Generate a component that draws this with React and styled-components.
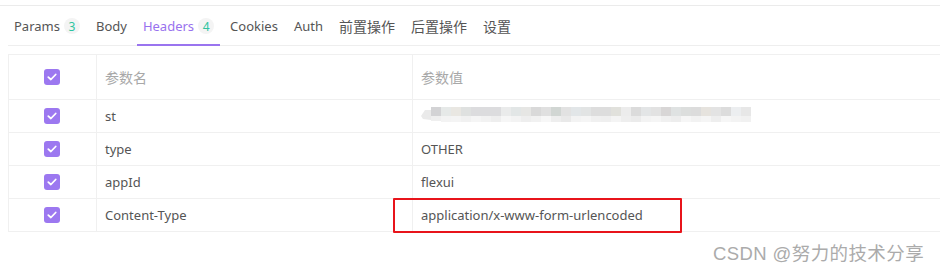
import React from "react";
import styled, { createGlobalStyle } from "styled-components";

const Global = createGlobalStyle`
  html, body { margin: 0; padding: 0; background: #fff; }
  body { font-family: "Noto Sans", "Open Sans", "Noto Sans CJK SC", sans-serif; overflow: hidden; }
`;

const Page = styled.div`
  position: relative;
  width: 940px;
  height: 270px;
  overflow: hidden;
  padding-top: 5px;
  box-sizing: border-box;
`;

const TopRule = styled.div`
  border-top: 1px solid #ebebeb;
`;

const TabBar = styled.div`
  display: flex;
  align-items: stretch;
  gap: 4px;
  margin-left: 8px;
  height: 39px;
  border-bottom: 1px solid #eeeeee;
`;

const Tab = styled.div`
  display: flex;
  align-items: center;
  gap: 4px;
  padding: 0 6px;
  font-size: ${(p) => (p.$cjk ? "14px" : "13px")};
  color: ${(p) => (p.$active ? "#9872ee" : "#555")};
  border-bottom: 2px solid ${(p) => (p.$active ? "#9a74ef" : "transparent")};
  margin-bottom: -1px;
  padding-top: 2px;
  box-sizing: border-box;
  white-space: nowrap;
`;

const Badge = styled.span`
  display: inline-flex;
  align-items: center;
  justify-content: center;
  width: 16px;
  height: 16px;
  border-radius: 50%;
  background: #f4f4f4;
  color: #2ec4a0;
  font-size: 12px;
`;

const Table = styled.div`
  margin: 8px 0 0 8px;
  width: 960px;
  border: 1px solid #f0f0f0;
  border-right: none;
`;

const Row = styled.div`
  display: grid;
  grid-template-columns: 87px 316px 1fr;
  height: ${(p) => (p.$head ? "44px" : "32px")};
  border-top: ${(p) => (p.$head ? "none" : "1px solid #f0f0f0")};
`;

const Cell = styled.div`
  display: flex;
  align-items: center;
  font-size: ${(p) => (p.$muted ? "14px" : "13px")};
  color: ${(p) => (p.$muted ? "#a8a8a8" : "#555")};
  border-left: ${(p) => (p.$first ? "none" : "1px solid #f0f0f0")};
  justify-content: ${(p) => (p.$center ? "center" : "flex-start")};
  padding-left: ${(p) => (p.$center ? "0" : "8px")};
`;

const Check = styled.span`
  display: inline-flex;
  align-items: center;
  justify-content: center;
  width: 16px;
  height: 16px;
  border-radius: 3px;
  background: #9c78f0;
  margin-right: 1px;
`;

const RedBox = styled.div`
  position: absolute;
  left: 393px;
  top: 198px;
  width: 285px;
  height: 31px;
  border: 2px solid #e8141b;
  border-radius: 1px;
`;

const Watermark = styled.div`
  position: absolute;
  left: 713px;
  top: 239px;
  font-family: "Liberation Sans", "Noto Sans CJK SC", sans-serif;
  font-size: 18.5px;
  color: #ababab;
  white-space: nowrap;
  letter-spacing: 0.4px;
`;

const CheckIcon = () => (
  <Check>
    <svg width="10" height="8" viewBox="0 0 10 8">
      <path d="M1.3 4.1 L3.9 6.5 L8.7 1.5" fill="none" stroke="#fff" strokeWidth="1.8" strokeLinecap="round" strokeLinejoin="round" />
    </svg>
  </Check>
);

const topGrays = ["#d3d3d5","#e6e9e8","#e9e7e2","#dfe1e0","#dcdcde","#dcdcde","#dcdcde","#eaebeb","#e2e6e6","#e6e6e4","#d9d9d9","#e0e0e0","#d1d6d3","#e2e2e2","#e2e6e8","#e2e4e4","#dddddd","#dddddd","#e1e1dc","#ececec","#dbdbdb","#e3e5e6","#e2e2e2","#d8d6d6","#dfe2e2","#dcdedd","#dcdcdc","#e6e3de","#e3e3e3","#dcdcdc","#eceef0","#e7e7e7"];
const botGrays = ["#f3f3f3","#f4f4f4","#f1f1f1","#f5f5f5","#f2f2f2","#eeeeee","#f6f6f6","#f3f3f3","#eeeeee","#f1f1f1","#f7f7f7","#eeeeee","#e9e9e9","#f3f3f3","#f5f5f5","#f0f0f0","#efefef","#f4f4f4","#eeeeee","#ebebeb","#f3f3f3","#f5f5f5","#f0f0f0","#ededed","#f6f6f6","#f2f2f2","#f5f5f5","#eeeeee","#f6f6f6","#f3f3f3","#f1f1f1"];

const Mosaic = () => (
  <svg width="340" height="18" viewBox="0 0 340 18">
    <polygon points="0,9 4,3 10,3 10,13 2,12" fill="#eaeaea" />
    {topGrays.map((c, i) => (
      <rect key={"t" + i} x={10 + i * 10} y={0} width={10} height={9} fill={c} />
    ))}
    {botGrays.map((c, i) => (
      <rect key={"b" + i} x={20 + i * 10} y={9} width={10} height={6} fill={c} />
    ))}
    <rect x="10" y="9" width="10" height="5" fill="#efefef" />
  </svg>
);

const tabs = [
  { label: "Params", badge: "3" },
  { label: "Body" },
  { label: "Headers", badge: "4", active: true },
  { label: "Cookies" },
  { label: "Auth" },
  { label: "前置操作", cjk: true },
  { label: "后置操作", cjk: true },
  { label: "设置", cjk: true },
];

const rows = [
  { name: "st", value: <Mosaic /> },
  { name: "type", value: "OTHER" },
  { name: "appId", value: "flexui" },
  { name: "Content-Type", value: "application/x-www-form-urlencoded" },
];

export default function App() {
  return (
    <>
      <Global />
      <Page>
        <TopRule />
        <TabBar>
          {tabs.map((t) => (
            <Tab key={t.label} $active={t.active} $cjk={t.cjk}>
              {t.label}
              {t.badge && <Badge>{t.badge}</Badge>}
            </Tab>
          ))}
        </TabBar>
        <Table>
          <Row $head>
            <Cell $first $center><CheckIcon /></Cell>
            <Cell $muted>参数名</Cell>
            <Cell $muted>参数值</Cell>
          </Row>
          {rows.map((r) => (
            <Row key={r.name}>
              <Cell $first $center><CheckIcon /></Cell>
              <Cell>{r.name}</Cell>
              <Cell>{r.value}</Cell>
            </Row>
          ))}
        </Table>
        <RedBox />
        <Watermark>CSDN @努力的技术分享</Watermark>
      </Page>
    </>
  );
}
